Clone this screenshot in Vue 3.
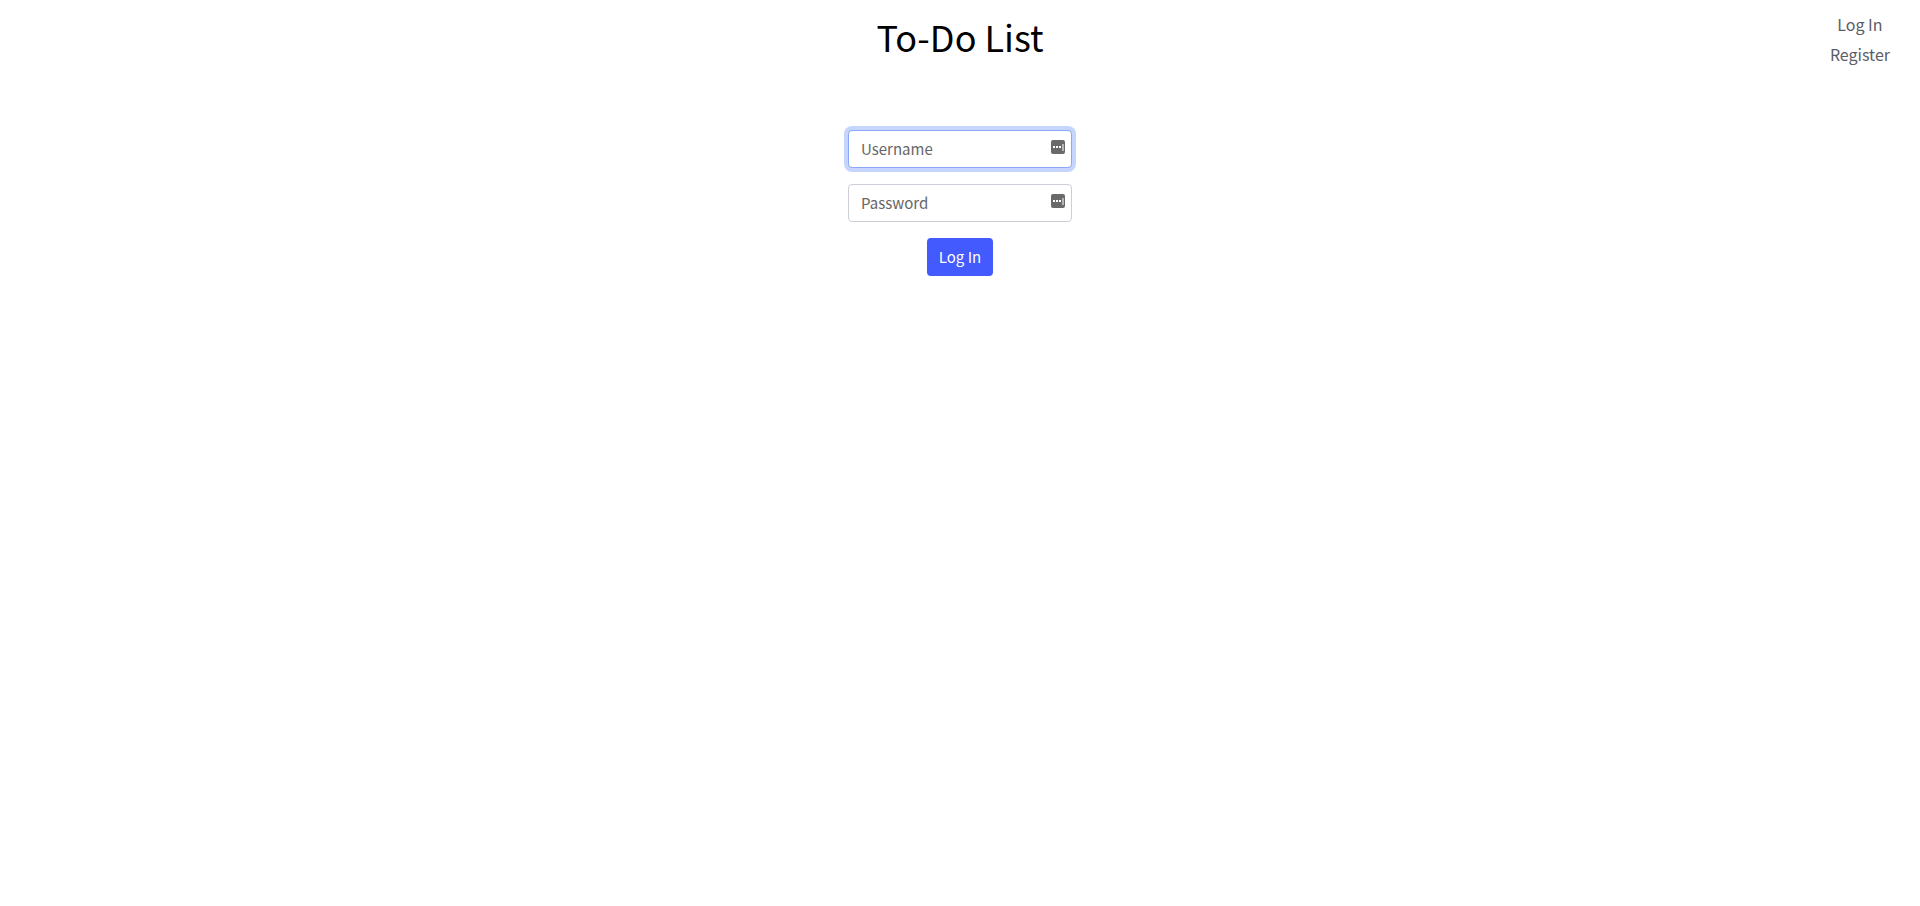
<script setup>
import { ref } from 'vue';

const username = ref('');
const password = ref('');
</script>

<template>
  <div class="page">
    <header class="top">
      <h1 class="title">To-Do List</h1>
      <nav class="links">
        <a href="#">Log In</a>
        <a href="#">Register</a>
      </nav>
    </header>
    <form class="login-form" @submit.prevent>
      <div class="field">
        <input v-model="username" class="focused" type="text" placeholder="Username">
        <svg class="key-icon" width="14" height="14" viewBox="0 0 14 14">
          <rect width="14" height="14" rx="2" fill="#6a6a6a" />
          <rect x="2" y="6" width="2" height="2" fill="#fff" />
          <rect x="5" y="6" width="2" height="2" fill="#fff" />
          <rect x="8" y="6" width="2" height="2" fill="#fff" />
          <rect x="11.5" y="4" width="1" height="7" fill="#fff" />
        </svg>
      </div>
      <div class="field">
        <input v-model="password" type="password" placeholder="Password">
        <svg class="key-icon" width="14" height="14" viewBox="0 0 14 14">
          <rect width="14" height="14" rx="2" fill="#6a6a6a" />
          <rect x="2" y="6" width="2" height="2" fill="#fff" />
          <rect x="5" y="6" width="2" height="2" fill="#fff" />
          <rect x="8" y="6" width="2" height="2" fill="#fff" />
          <rect x="11.5" y="4" width="1" height="7" fill="#fff" />
        </svg>
      </div>
      <button type="submit">Log In</button>
    </form>
  </div>
</template>

<style>
body {
  background: #fff;
}
</style>

<style scoped>
.page {
  min-height: 906px;
  font-family: "Noto Sans CJK SC", "Noto Sans", sans-serif;
  color: #000;
}

.top {
  display: grid;
  grid-template-columns: 1fr auto 1fr;
  height: 130px;
}

.title {
  grid-column: 2;
  margin: 10px 0 0;
  font-size: 36px;
  font-weight: 400;
  line-height: 52px;
}

.links {
  grid-column: 3;
  justify-self: end;
  display: flex;
  flex-direction: column;
  align-items: center;
  padding: 9px 30px 0 0;
}

.links a {
  font-size: 16px;
  line-height: 30px;
  color: #5c5c68;
  text-decoration: none;
}

.login-form {
  display: flex;
  flex-direction: column;
  align-items: center;
  gap: 16px;
}

.field {
  position: relative;
  width: 224px;
}

.field input {
  display: block;
  box-sizing: border-box;
  width: 100%;
  height: 38px;
  padding: 5px 12px 7px;
  font-family: inherit;
  font-size: 15px;
  color: #495057;
  background: #fff;
  border: 1px solid #ccced8;
  border-radius: 4px;
  outline: none;
}

.field input::placeholder {
  color: #666;
  opacity: 1;
}

.field input.focused {
  border-color: #8ba8f8;
  box-shadow: 0 0 0 4px #c6d5fd;
}

.key-icon {
  position: absolute;
  top: 10px;
  right: 7px;
}

button {
  width: 66px;
  height: 38px;
  padding: 0 0 2px;
  font-family: inherit;
  font-size: 15px;
  color: #fff;
  background-color: #435aff;
  border: none;
  border-radius: 4px;
  cursor: pointer;
}
</style>
